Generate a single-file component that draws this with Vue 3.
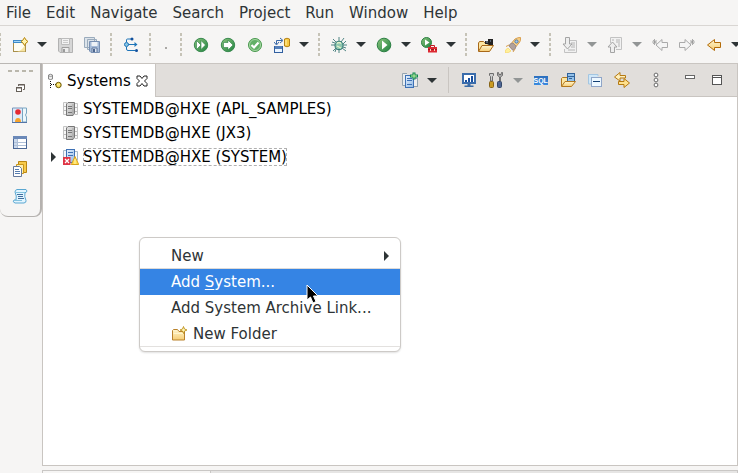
<script setup>
import { ref } from 'vue'

const menus = ['File', 'Edit', 'Navigate', 'Search', 'Project', 'Run', 'Window', 'Help']

const tools = [
  { kind: 'edge' },
  { kind: 'icon', icon: 'new', label: 'New' },
  { kind: 'drop', label: 'New options' },
  { kind: 'icon', icon: 'save', label: 'Save' },
  { kind: 'icon', icon: 'saveall', label: 'Save All' },
  { kind: 'sep' },
  { kind: 'icon', icon: 'tree', label: 'Open Hierarchy' },
  { kind: 'sep' },
  { kind: 'dot' },
  { kind: 'sep' },
  { kind: 'icon', icon: 'ffwd', label: 'Activate All' },
  { kind: 'icon', icon: 'go', label: 'Activate' },
  { kind: 'icon', icon: 'check', label: 'Validate' },
  { kind: 'icon', icon: 'sync', label: 'Transfer' },
  { kind: 'drop', label: 'Transfer options' },
  { kind: 'sep' },
  { kind: 'icon', icon: 'bug', label: 'Debug' },
  { kind: 'drop', label: 'Debug options' },
  { kind: 'icon', icon: 'run', label: 'Run' },
  { kind: 'drop', label: 'Run options' },
  { kind: 'icon', icon: 'external', label: 'External Tools' },
  { kind: 'drop', label: 'External Tools options' },
  { kind: 'sep' },
  { kind: 'icon', icon: 'openfile', label: 'Open' },
  { kind: 'icon', icon: 'rocket', label: 'Launch' },
  { kind: 'drop', label: 'Launch options' },
  { kind: 'sep' },
  { kind: 'icon', icon: 'next', label: 'Next Annotation' },
  { kind: 'drop', label: 'Next options', off: true },
  { kind: 'icon', icon: 'prev', label: 'Previous Annotation' },
  { kind: 'drop', label: 'Previous options', off: true },
  { kind: 'icon', icon: 'lastedit', label: 'Last Edit Location' },
  { kind: 'icon', icon: 'nextedit', label: 'Next Edit Location' },
  { kind: 'icon', icon: 'back', label: 'Back' },
  { kind: 'drop', label: 'Back options' }
]

const viewTools = [
  { kind: 'icon', icon: 'addsystem', label: 'Add System' },
  { kind: 'drop', label: 'Add System options' },
  { kind: 'bar' },
  { kind: 'icon', icon: 'monitor', label: 'Administration' },
  { kind: 'icon', icon: 'wrench', label: 'Maintenance' },
  { kind: 'drop', label: 'Maintenance options', off: true },
  { kind: 'text', text: 'SQL', label: 'SQL Console' },
  { kind: 'icon', icon: 'find', label: 'Find System' },
  { kind: 'icon', icon: 'collapse', label: 'Collapse All' },
  { kind: 'icon', icon: 'link', label: 'Link with Editor' },
  { kind: 'gap' },
  { kind: 'icon', icon: 'dots', label: 'View Menu' },
  { kind: 'gap' },
  { kind: 'icon', icon: 'min', label: 'Minimize' },
  { kind: 'icon', icon: 'max', label: 'Maximize' }
]

const trim = [
  { icon: 'restore', label: 'Restore' },
  { icon: 'bookmarks', label: 'Quick View' },
  { icon: 'table', label: 'Properties' },
  { icon: 'copies', label: 'Templates' },
  { icon: 'scroll', label: 'Job Log' }
]

const systems = [
  { name: 'SYSTEMDB@HXE (APL_SAMPLES)', icon: 'server' },
  { name: 'SYSTEMDB@HXE (JX3)', icon: 'server' },
  { name: 'SYSTEMDB@HXE (SYSTEM)', icon: 'serverbad', expandable: true }
]
const focused = ref(2)
</script>

<template>
  <div class="workbench">
    <svg class="sprites" aria-hidden="true">
      <defs>
        <linearGradient id="gold" x1="0" y1="0" x2="0" y2="1"><stop offset="0" stop-color="#fff6cf" /><stop offset="1" stop-color="#f6cd74" /></linearGradient>
        <linearGradient id="green" x1="0" y1="0" x2="1" y2="1"><stop offset="0" stop-color="#8cc47c" /><stop offset="1" stop-color="#1f8240" /></linearGradient>
        <linearGradient id="blue" x1="0" y1="0" x2="1" y2="1"><stop offset="0" stop-color="#e8f3ff" /><stop offset="1" stop-color="#8fb8e4" /></linearGradient>
        <linearGradient id="grey" x1="0" y1="0" x2="1" y2="1"><stop offset="0" stop-color="#e4e4e4" /><stop offset="1" stop-color="#b0b0b0" /></linearGradient>
      </defs>

      <symbol id="new" viewBox="0 0 16 16">
        <rect x="1.500" y="3.500" width="12" height="11" fill="#fffdf2" stroke="#a98f4a" />
        <path d="M1 3h10v3H1z" fill="#3f8bc9" /><path d="M2 4h8v1H2z" fill="#a7d6f5" />
        <path d="M13 7v7.500H5q6-1 8-7.500" fill="#f6e3a0" />
        <path d="M12.500.5 14 3l2 1.500L14 6l-1.500 2.500L11 6 9 4.500 11 3z" fill="#fff4b0" stroke="#b8860b" />
      </symbol>
      <symbol id="save" viewBox="0 0 16 16">
        <path d="M1.500 1.500h14v14H3l-1.500-1.500z" fill="#d6d6d6" stroke="#b2b2b2" />
        <path d="M4.500 1.500h8v6h-8z" fill="#f2f2f2" stroke="#bcbcbc" /><path d="M6 3.500h5M6 5.500h5" stroke="#c9c9c9" />
        <path d="M5 15v-4.500h7V15" fill="#ededed" stroke="#9c9c9c" /><path d="M6 12h2v3H6z" fill="#999" />
      </symbol>
      <symbol id="saveall" viewBox="0 0 16 16">
        <path d="M.5.5h10v10H.5zM3.500 2.500h9v10h-9z" fill="#dce3ea" stroke="#9aabbc" />
        <path d="M5.500 4.500h10v11H7l-1.500-1.500z" fill="#a6bbd8" stroke="#7890b3" />
        <path d="M7.500 5h6v4h-6z" fill="#eef2f7" /><path d="M8 15v-4h5v4" fill="#dfe7f2" stroke="#60799e" /><path d="M9 12h2v3H9z" fill="#4d668e" />
      </symbol>
      <symbol id="tree" viewBox="0 0 16 16">
        <path d="M3.500 5V3q0-1 1-1H8M3.500 10v2q0 1.500 1.500 1.500h7M5 7.500h8" fill="none" stroke="#1e74b8" />
        <path d="M11.500 5l3 2.500-3 2.500z" fill="#1e74b8" />
        <circle cx="3.500" cy="7.500" r="2" fill="#8cc8e6" stroke="#1e74b8" />
        <circle cx="9" cy="2" r="1.500" fill="#12509d" /><circle cx="13.500" cy="13.500" r="1.500" fill="#12509d" />
      </symbol>
      <symbol id="ffwd" viewBox="0 0 16 16">
        <circle cx="8" cy="8" r="6.700" fill="url(#green)" stroke="#3a8a50" />
        <path d="M3.500 3.500 8 8l-4.500 4.500zM8 3.500 12.500 8 8 12.500z" fill="#fff" stroke="#2b8143" stroke-width=".6" />
      </symbol>
      <symbol id="go" viewBox="0 0 16 16">
        <circle cx="8" cy="8" r="6.700" fill="url(#green)" stroke="#3a8a50" />
        <path d="M3.500 5.500H8V3L13 8l-5 5v-2.500H3.500z" fill="#fff" stroke="#2b8143" stroke-width=".6" />
      </symbol>
      <symbol id="check" viewBox="0 0 16 16">
        <circle cx="8" cy="8" r="6.500" fill="#62b066" stroke="#4a994f" /><circle cx="8" cy="8" r="5.500" fill="none" stroke="#a5d6a2" />
        <path d="M4.500 8 7 10.500 11.500 5.500" fill="none" stroke="#fff" stroke-width="2.200" />
      </symbol>
      <symbol id="sync" viewBox="0 0 16 16">
        <path d="M2.500 7V3.500H8M0 5l2.500 3L5 5M6 1l3 2.500L6 6" fill="none" stroke="#3b69a8" />
        <rect x=".5" y="9.500" width="8" height="6" fill="#eaf4ff" stroke="#315f9f" /><path d="M1 9h7v3H1z" fill="#5580ba" />
        <path d="M10.500 2v7q2.500 1.500 5 0V2q-2.500-1.500-5 0z" fill="#f8cb45" stroke="#b68318" /><path d="M12 3v5" stroke="#fff3b2" />
      </symbol>
      <symbol id="bug" viewBox="0 0 16 16">
        <path d="M5 5 2 2M4 8H0M5 11l-3 3M8 4V0M10 5l3-4M12 8h4M11 11l4 3M8 12v4M4 6 1 5M5 12l-1 3M12 7l3-3M12 10l3 1" stroke="#276a68" stroke-width=".8" fill="none" />
        <ellipse cx="8" cy="8.500" rx="4" ry="4.200" fill="#8fc6b0" stroke="#28716d" /><path d="M6 6.500q2-2 4 0M6 9l4 2" stroke="#e3f4c9" stroke-width="1.300" fill="none" />
      </symbol>
      <symbol id="run" viewBox="0 0 16 16">
        <circle cx="8" cy="8" r="6.800" fill="url(#green)" stroke="#2d8044" /><path d="M6 3.500 11.500 8 6 12.500z" fill="#fff" />
      </symbol>
      <symbol id="external" viewBox="0 0 16 16">
        <circle cx="5.500" cy="5.500" r="5" fill="url(#green)" stroke="#2d8044" /><path d="M4 2.500 8.500 5.500 4 8.500z" fill="#fff" />
        <path d="M9.500 10V8.500h4V10" fill="none" stroke="#bd1c24" /><path d="M7 10h9v5.500H7z" fill="#dc2932" /><path d="M7 12.500h9" stroke="#a4111c" /><path d="M9 12h1v2H9zM13 12h1v2h-1z" fill="#ffd0bd" />
      </symbol>
      <symbol id="openfile" viewBox="0 0 16 16">
        <path d="M.5 14V6l1-1.500h4l1 1h6V9" fill="#fce6a2" stroke="#a86818" />
        <path d="M.5 14.500 4 8.500h11.500l-4 6z" fill="url(#gold)" stroke="#a86818" />
        <path d="M7 4h3V2h5v6h-4L9 7H7z" fill="#222" /><path d="M8 5h2M12 4h1" stroke="#8ea8c0" />
      </symbol>
      <symbol id="rocket" viewBox="0 0 16 16">
        <path d="M0 16q0-4 3-5l3 3q-2 2-6 2" fill="#fff09a" stroke="#f7d569" stroke-width=".7" />
        <path d="M4 9 10 2q3-1.700 5.500-1.500Q16 4 14 6l-6 7z" fill="#f8cf83" stroke="#d99f4f" />
        <path d="M4 9q1-3 4-3l3 3q0 3-3 4.500z" fill="#b0a19b" stroke="#9b8c88" /><circle cx="11.500" cy="4.500" r="1.600" fill="#9dc7ee" stroke="#537aa5" /><path d="M1 9.500 4 8M8 15l2-3" stroke="#d99f4f" />
      </symbol>
      <symbol id="next" viewBox="0 0 16 16">
        <path d="M6.500 3.500h8v12h-12V12" fill="#f1f1f1" stroke="#c2c2c2" /><path d="M9 6h4M10 8h3M9 10h4M6 13h7" stroke="#b4b4b4" />
        <path d="M3.500.5h4V7H10l-4.500 5L1 7h2.500z" fill="#eee" stroke="#a4a4a4" />
      </symbol>
      <symbol id="prev" viewBox="0 0 16 16">
        <path d="M3.500 6V.5h11v12H9" fill="#f1f1f1" stroke="#c2c2c2" /><path d="M5 3h2M9 3h4M9 5h4M11 7h2M11 9h2" stroke="#b4b4b4" />
        <path d="M3.500 15.500h4V10H10L5.500 5 1 10h2.500z" fill="#eee" stroke="#a4a4a4" />
      </symbol>
      <symbol id="lastedit" viewBox="0 0 16 16">
        <path d="M15.500 5.500H10V2.500L4 8l6 5.500v-3h5.500z" fill="#f5f5f5" stroke="#aaa" /><path d="M2.500 2v6M0 5h5M1 3l3.500 4M4.500 3 1 7" stroke="#999" stroke-width=".8" />
      </symbol>
      <symbol id="nextedit" viewBox="0 0 16 16">
        <path d="M.5 5.500H6V2.500L12 8l-6 5.500v-3H.5z" fill="#f5f5f5" stroke="#aaa" /><path d="M13.500 2v6M11 5h5M11.500 3 15 7M15 3l-3.500 4" stroke="#999" stroke-width=".8" />
      </symbol>
      <symbol id="back" viewBox="0 0 16 16">
        <path d="M14.500 5.500h-6V2.500L1.500 8l7 5.500v-3h6z" fill="url(#gold)" stroke="#b36b08" stroke-linejoin="round" />
      </symbol>

      <symbol id="addsystem" viewBox="0 0 16 16">
        <path d="M5 1.500H.5v12H5" fill="#e9edf0" stroke="#96a5b0" /><rect x="11.500" y="6.500" width="4" height="8" fill="#eee" stroke="#96a5b0" />
        <rect x="3.500" y="3.500" width="8" height="12" fill="url(#blue)" stroke="#3e71b5" /><path d="M5 6.500h5M5 8.500h5M5 12.500h5" stroke="#3e71b5" />
        <path d="M10.500.5h3v2h2.500v3h-2.500v2h-3v-2H8v-3h2.500z" fill="#0f8450" /><path d="M12 1.500v5M9 4h6" stroke="#c4f5a0" />
      </symbol>
      <symbol id="monitor" viewBox="0 0 16 16">
        <rect x="2" y="2" width="12" height="9" fill="#fff" stroke="#3a6cab" stroke-width="2" /><path d="M6.500 12h3v1.500h3V15h-9v-1.500h3z" fill="#386ba7" />
        <path d="M4 8h2v2H4zM7 6h2v4H7zM10 4h2v6h-2z" fill="#174e9e" />
      </symbol>
      <symbol id="wrench" viewBox="0 0 16 16">
        <path d="M1.500 1.500h4v2l-1 1V9h-2V4.500l-1-1z" fill="#ccc" stroke="#6d6d6d" /><rect x="1.500" y="9.500" width="4" height="6" rx="1" fill="#ca9b22" stroke="#86641a" />
        <path d="M11.500 9V5l-2-1.500v-3h1l.5 2h2l.5-2h1v3l-2 1.500v4z" fill="#aaa" stroke="#5d5d5d" stroke-width=".8" /><rect x="9.500" y="9.500" width="4" height="6" rx="1" fill="#4e6593" stroke="#344869" />
      </symbol>
      <symbol id="find" viewBox="0 0 16 16">
        <path d="M1.500 14V6.500l1-1h5V9" fill="#fce6a2" stroke="#b2781e" /><rect x="7.500" y="1.500" width="7" height="8" fill="#92c0e9" stroke="#31639b" /><path d="M8 4.500h6M9 6.500h3" stroke="#31639b" />
        <path d="M1.500 14.500 5 9.500h10.500l-4 5z" fill="url(#gold)" stroke="#b2781e" />
      </symbol>
      <symbol id="collapse" viewBox="0 0 16 16">
        <path d="M11 4V2.500H1.500V12H4" fill="#cfe7f8" stroke="#a3c6e2" /><rect x="4.500" y="5.500" width="10" height="9" fill="#edf8ff" stroke="#8fa5c8" /><path d="M6 9.500h7" stroke="#123e73" />
      </symbol>
      <symbol id="link" viewBox="0 0 16 16">
        <path d="M11.500 3.500H6V.5L.5 5 6 9V6h5.500z" fill="#fff0bd" stroke="#b57911" /><path d="M4.500 9.500H10v-3l5.500 4.500-5.500 4.500v-3H4.500z" fill="#ffe18d" stroke="#b57911" />
      </symbol>
      <symbol id="dots" viewBox="0 0 16 16"><g fill="#fff" stroke="#6a6a6a"><circle cx="8" cy="3" r="1.900" /><circle cx="8" cy="8" r="1.900" /><circle cx="8" cy="13" r="1.900" /></g></symbol>
      <symbol id="min" viewBox="0 0 16 16"><rect x="3.500" y="3.500" width="9" height="3" fill="#fff" stroke="#666" /></symbol>
      <symbol id="max" viewBox="0 0 16 16"><rect x="3.500" y="3.500" width="9" height="9" fill="#fff" stroke="#555" /><path d="M3 5.500h10" stroke="#555" /></symbol>

      <symbol id="restore" viewBox="0 0 16 16"><path d="M6.500 6V4.500h6v5H11" fill="#fff" stroke="#665f58" /><path d="M6 5h7" stroke="#665f58" /><rect x="4.500" y="7.500" width="5" height="4" fill="#fff" stroke="#665f58" /><path d="M4 8h6" stroke="#665f58" /></symbol>
      <symbol id="bookmarks" viewBox="0 0 16 16">
        <path d="M.5 1v14.500h10V1z" fill="#dfeaf8" stroke="#7795bd" /><path d="M10.500 1h4v5l-1 2 1 2v5h-4z" fill="#eef7fc" stroke="#78a5c2" /><path d="M0 15.500h15" stroke="#5474a5" />
        <circle cx="6" cy="5" r="2.800" fill="#e42832" /><path d="M3 15q0-4 3-4t3 4z" fill="#f7a32b" />
      </symbol>
      <symbol id="table" viewBox="0 0 16 16">
        <rect x="1.500" y="2.500" width="13" height="12" fill="#fff" stroke="#4b6795" /><path d="M1 2h14v3H1z" fill="#6b89b8" /><path d="M2 5h3v9H2z" fill="#cbd9ec" /><path d="M5.500 5v9M2 8.500h12M2 11.500h12" stroke="#aebfd7" />
      </symbol>
      <symbol id="copies" viewBox="0 0 16 16">
        <path d="M6.500.5h8v11h-8z" fill="#f7ca4b" stroke="#b98713" /><path d="M4.500 3.500h7v9h-7z" fill="#fff0ae" stroke="#c8951b" /><path d="M1.500 5.500h6l2 2v8h-8z" fill="#fff" stroke="#64789c" /><path d="M3 8.500h4M3 10.500h5M3 12.500h5" stroke="#577db0" />
      </symbol>
      <symbol id="scroll" viewBox="0 0 16 16">
        <path d="M5 1.500h9q2 1.500 0 3h-1q-1 4 1 8 .5 2-2 2.500H3q-3-1-1-3h2q1-4-1-8 0-2 2-2.500z" fill="#e3f5ff" stroke="#5aa7d1" /><path d="M4 4.500h9M2 12.500h8" stroke="#83c2df" /><path d="M5 6.500h6M6 8.500h5M6 10.500h6" stroke="#416f9e" />
      </symbol>

      <symbol id="systems" viewBox="0 0 16 16">
        <path d="M1.500 2v4q2 1 4 0V2q-2-1.500-4 0z" fill="#eee" stroke="#888" /><path d="M2 3q2 1 3 0" stroke="#999" fill="none" /><path d="M3.500 8v7M4 11.500h5" stroke="#111" stroke-dasharray="1 1" />
        <circle cx="11.500" cy="12" r="2.700" fill="#f6dc59" stroke="#6b5809" /><path d="M10 11.500q1.500 1 3 0" stroke="#fff5b8" fill="none" />
      </symbol>
      <symbol id="server" viewBox="0 0 16 16">
        <path d="M4 1.500H.5v12H4M12 2.500h2.500v11H12" fill="#f7f7f7" stroke="#c4c4c4" /><path d="M1 5.500h2M1 9.500h2M12 6.500h2M12 10.500h2" stroke="#bbb" />
        <path d="M3.500 3 5 1.500h6.500v11L10 14.500H3.500z" fill="url(#grey)" stroke="#777" /><path d="M5 5.500h4M5 7.500h4M5 11.500h4" stroke="#777" /><path d="M10 3v11" stroke="#999" stroke-width=".7" />
      </symbol>
      <symbol id="serverbad" viewBox="0 0 16 16">
        <path d="M4 1.500H.5v10H4M12 2.500h2.500v9" fill="#f3f7fa" stroke="#a7b9c8" /><rect x="3.500" y=".5" width="8" height="13" fill="url(#blue)" stroke="#3e71b5" /><path d="M5 3.500h5M5 6.500h5" stroke="#3e71b5" />
        <path d="M0 8h7.500v8H0z" fill="#df3545" /><path d="M2 10l4 4M6 10l-4 4" stroke="#fff" stroke-width="1.300" /><path d="M12 7.500 15.700 15.500H8.300z" fill="#ffdc52" stroke="#d8a21a" /><path d="M12 10v5" stroke="#fff4b0" />
      </symbol>
      <symbol id="folder" viewBox="0 0 16 16">
        <path d="M1.500 14V4.500l1-1h4l1.500 2h5.500V14z" fill="url(#gold)" stroke="#b9822c" stroke-linejoin="round" /><path d="M2.500 7.500h10" stroke="#fff5cc" />
        <path d="M12.500.5 13.500 3l2.500 1-2.500 1-1 2.500-1-2.500L9 4l2.500-1z" fill="#fff5b5" stroke="#b8860b" stroke-width=".8" />
      </symbol>
    </svg>

    <nav class="menubar" aria-label="Main menu">
      <button v-for="m in menus" :key="m" type="button">{{ m }}</button>
    </nav>

    <div class="toolbar" role="toolbar" aria-label="Main toolbar">
      <template v-for="(t, i) in tools" :key="i">
        <button v-if="t.kind === 'icon'" type="button" class="tool" :aria-label="t.label"><svg class="icon"><use :href="'#' + t.icon" /></svg></button>
        <button v-else-if="t.kind === 'drop'" type="button" class="drop" :class="{ off: t.off }" :aria-label="t.label"><i class="caret"></i></button>
        <span v-else :class="t.kind"></span>
      </template>
    </div>

    <div class="body">
      <aside class="side">
        <div class="trim" role="toolbar" aria-label="Minimized views">
          <span class="grip"></span>
          <button v-for="t in trim" :key="t.icon" type="button" class="tool" :aria-label="t.label"><svg class="icon"><use :href="'#' + t.icon" /></svg></button>
        </div>
      </aside>

      <main class="stack">
        <section class="view">
          <header class="head">
            <div class="tab">
              <svg class="icon"><use href="#systems" /></svg>
              <span class="title">Systems</span>
              <button type="button" class="close" aria-label="Close">
                <svg class="cross" viewBox="0 0 12 12"><path d="M1 1h3l2 2.500L8 1h3v2.500L8.500 6 11 8.500V11H8L6 8.500 4 11H1V8.500L3.500 6 1 3.500z" fill="#fff" stroke="#222" /></svg>
              </button>
            </div>
            <div class="viewtools" role="toolbar" aria-label="Systems toolbar">
              <template v-for="(t, i) in viewTools" :key="i">
                <button v-if="t.kind === 'icon'" type="button" class="tool" :aria-label="t.label"><svg class="icon"><use :href="'#' + t.icon" /></svg></button>
                <button v-else-if="t.kind === 'text'" type="button" class="tool" :aria-label="t.label"><span class="chip">{{ t.text }}</span></button>
                <button v-else-if="t.kind === 'drop'" type="button" class="drop" :class="{ off: t.off }" :aria-label="t.label"><i class="caret"></i></button>
                <span v-else :class="t.kind"></span>
              </template>
            </div>
          </header>

          <ul class="tree" role="tree">
            <li v-for="(s, i) in systems" :key="s.name" role="treeitem" :aria-selected="focused === i" @click="focused = i">
              <span class="twist"><i v-if="s.expandable" class="right"></i></span>
              <svg class="icon"><use :href="'#' + s.icon" /></svg>
              <span class="name" :class="{ focus: focused === i }">{{ s.name }}</span>
            </li>
          </ul>
        </section>
        <div class="lower"><span class="lowertab"></span></div>
      </main>
    </div>

    <div class="context" role="menu">
      <button type="button" role="menuitem" class="top">New<i class="right"></i></button>
      <button type="button" role="menuitem" class="active"><span>Add <u>S</u>ystem...</span></button>
      <button type="button" role="menuitem">Add System Archive Link...</button>
      <button type="button" role="menuitem"><svg class="icon"><use href="#folder" /></svg>New Folder</button>
    </div>
    <svg class="pointer" viewBox="0 0 12 20" aria-hidden="true"><path d="M1 1v15l3.500-3 2.500 6 3-1.500L7.500 12H12z" fill="#000" stroke="#fff" stroke-linejoin="round" /></svg>
  </div>
</template>

<style>
html, body { background: #f6f5f4; }
</style>

<style scoped>
.workbench {
  position: relative;
  display: flex;
  flex-direction: column;
  height: 100vh;
  overflow: hidden;
  background: #f6f5f4;
  color: #2e3436;
  font: 15px/18px "DejaVu Sans", sans-serif;
}
.sprites { position: absolute; width: 0; height: 0; }
button { margin: 0; padding: 0; border: 0; background: none; color: inherit; font: inherit; }
.icon { display: block; flex: none; width: 16px; height: 16px; }

.menubar {
  display: flex;
  flex: none;
  gap: 15px;
  height: 25px;
  padding: 0 6px;
  border-bottom: 1px solid #d9d6d3;
}
.toolbar {
  display: flex;
  flex: none;
  align-items: center;
  height: 37px;
  overflow: hidden;
}
.tool, .drop { display: flex; flex: none; align-items: center; justify-content: center; height: 24px; }
.tool { width: 27px; }
.drop { width: 18px; }
.caret { border: solid transparent; border-width: 5px 5px 0; border-top-color: #2e3436; }
.off .caret { border-top-color: #929595; }
.chip { width: 14px; height: 9px; background: linear-gradient(#2c6fbd, #3a8be0); color: #fff; font: 700 7px/9px "Liberation Sans", sans-serif; text-align: center; }
.sep, .edge {
  flex: none;
  width: 12px;
  height: 23px;
  background: repeating-linear-gradient(#c6c3b7 0 3px, transparent 3px 5px) center / 2px 100% no-repeat;
}
.edge { width: 6px; background-position: left; background-size: 1px 100%; }
.dot { display: flex; flex: none; justify-content: center; width: 19px; height: 8px; align-items: flex-end; }
.dot::after { content: ""; width: 2px; height: 2px; background: #aaa8a5; }

.body { display: flex; flex: 1; min-height: 0; }
.side { flex: none; width: 42px; border-top: 1px solid #bab7b4; }
.trim {
  display: flex;
  flex-direction: column;
  align-items: center;
  width: 42px;
  box-sizing: border-box;
  padding: 6px 0 7px;
  border: solid #b5b2af;
  border-width: 0 2px 1px 0;
  border-radius: 0 0 8px 8px;
}
.trim .tool { height: 27px; }
.grip { width: 25px; height: 2px; margin-bottom: 2px; background: repeating-linear-gradient(90deg, #bab7ac 0 4px, transparent 4px 7px); }

.stack { display: flex; flex: 1; flex-direction: column; min-width: 0; }
.view { flex: 1; border: 1px solid #c9c5c1; background: #fff; }
.head {
  display: flex;
  height: 32px;
  border-bottom: 1px solid #c9c5c1;
  background: #e1dedb;
}
.tab {
  display: flex;
  align-items: center;
  gap: 4px;
  height: 33px;
  padding: 0 7px 0 4px;
  border-right: 1px solid #c9c5c1;
  background: #fff;
  color: #000;
}
.close { margin-left: 1px; }
.cross { display: block; width: 12px; height: 12px; }
.viewtools { display: flex; align-items: center; margin-left: auto; padding-right: 7px; }
.bar { width: 14px; height: 26px; background: linear-gradient(#c9c5c1, #c9c5c1) center / 1px 100% no-repeat; }
.gap { width: 7px; }

.tree { margin: 0; padding: 0 0 0 8px; list-style: none; color: #000; }
.tree li { display: flex; align-items: center; height: 24px; }
.twist { width: 12px; }
.right { display: block; width: 0; border: solid transparent; border-width: 5px 0 5px 5px; border-left-color: #2e3436; }
.name { margin-left: 4px; }
.focus { outline: 1px dashed #b0b0b0; outline-offset: -1px; }

.lower { flex: none; height: 2px; margin-top: 4px; border: solid #c9c7c5; border-width: 1px 1px 0; background: #e6e5e4; }
.lowertab { display: block; width: 24%; height: 2px; border-right: 1px solid #c9c7c5; background: #f6f5f4; }

.context {
  position: absolute;
  left: 139px;
  top: 237px;
  width: 260px;
  padding: 5px 0 4px;
  border: 1px solid #cdcac7;
  border-radius: 6px;
  background: #fff;
  box-shadow: 0 1px 2px rgb(0 0 0 / 12%);
}
.context button { display: flex; align-items: center; gap: 6px; width: 100%; height: 26px; padding: 0 11px 0 31px; text-align: left; }
.context .top { justify-content: space-between; border-bottom: 1px solid #dddad8; }
.context .active { background: #3584e4; color: #fff; }
.context button:last-child { border-bottom: 1px solid #e3e1df; }
.context u { text-underline-offset: 2px; }
.pointer { position: absolute; left: 306px; top: 284px; width: 12px; height: 20px; }
</style>
